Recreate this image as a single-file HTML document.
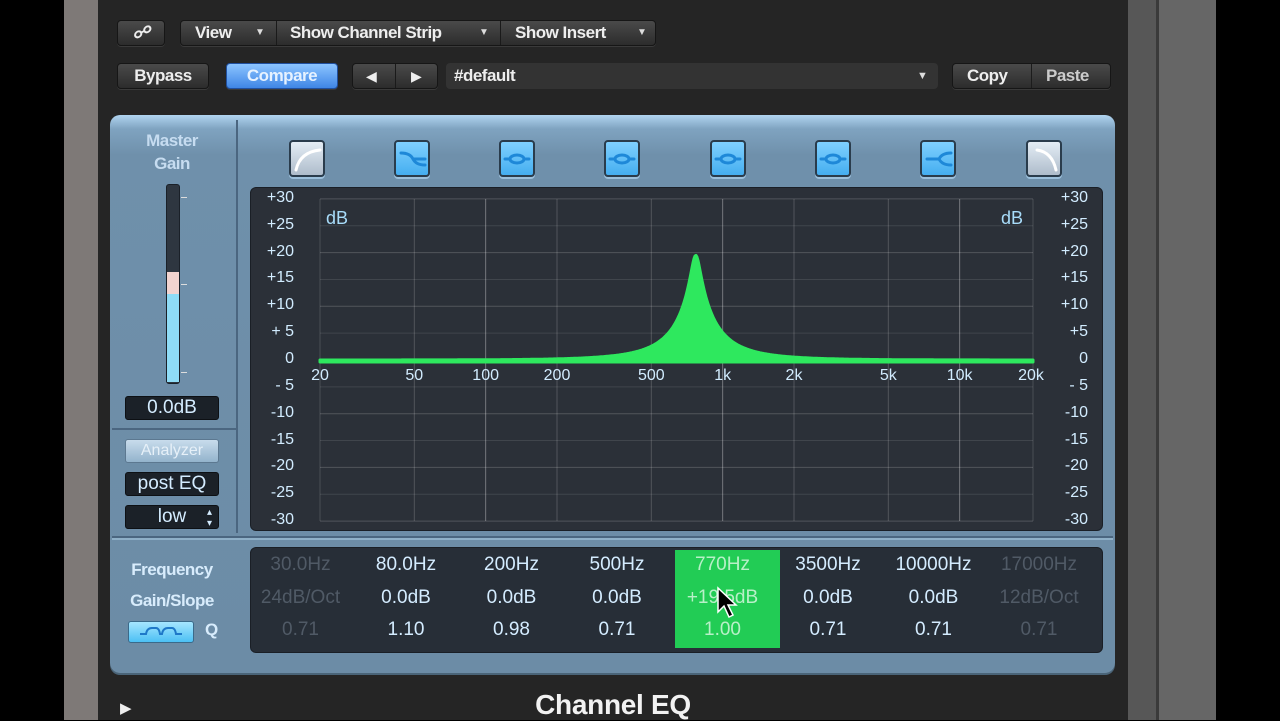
<!DOCTYPE html>
<html><head><meta charset="utf-8"><style>
*{margin:0;padding:0;box-sizing:border-box}
body{width:1280px;height:720px;background:#000;position:relative;overflow:hidden;font-family:"Liberation Sans",sans-serif}
.a{position:absolute}
.btn{position:absolute;height:26px;border-radius:4px;background:linear-gradient(#4a4a4a,#2c2c2c);border:1px solid #161616;color:#eee;font-weight:bold;font-size:17px;line-height:24px;text-align:center;letter-spacing:-0.5px;box-shadow:0 1px 0 #3a3a3a}
.lbl{color:#d2ecff;font-size:16px;position:absolute;text-align:right;width:40px}
.lblr{color:#d2ecff;font-size:16px;position:absolute;text-align:right;width:40px}
.fx{color:#d2ecff;font-size:16px;position:absolute;top:367px;transform:translateX(-50%)}
.bb{position:absolute;top:140px;width:36px;height:37px;border-radius:4px;border:2px solid #2a3c4c;background:linear-gradient(#7fd0ff,#45aef0);box-shadow:0 2px 0 #9cc0dc}
.bb.g{background:linear-gradient(#e4edf5,#aebccb)}
.col{position:absolute;width:105px;text-align:center;font-size:19px;color:#d4ecff}
.dim{color:#505a66}
.lp{position:absolute;left:125px;width:94px;height:24px;border-radius:3px;background:#1b2128;border:1px solid #0d1014;color:#d4ecff;font-size:19px;text-align:center;line-height:22px}
.tb{position:absolute;color:#eee;font-weight:bold;font-size:17px;line-height:24px;letter-spacing:-.5px}
</style></head><body>
<div class="a" style="left:64px;top:0;width:34px;height:720px;background:#7e7977"></div>
<div class="a" style="left:98px;top:0;width:1030px;height:720px;background:#252525"></div>
<div class="a" style="left:1128px;top:0;width:28px;height:720px;background:#575757"></div>
<div class="a" style="left:1156px;top:0;width:3px;height:720px;background:#3a3a3a"></div>
<div class="a" style="left:1159px;top:0;width:57px;height:720px;background:#666"></div>

<div class="btn" style="left:117px;top:20px;width:48px;font-style:italic">&#x260D;</div>
<div class="btn" style="left:180px;top:20px;width:476px"></div>
<div class="tb" style="left:195px;top:21px">View</div>
<div class="a" style="left:255px;top:21px;color:#ddd;font-size:10px;line-height:24px">▼</div>
<div class="a" style="left:276px;top:21px;width:1px;height:24px;background:#1a1a1a"></div>
<div class="tb" style="left:290px;top:21px">Show Channel Strip</div>
<div class="a" style="left:479px;top:21px;color:#ddd;font-size:10px;line-height:24px">▼</div>
<div class="a" style="left:500px;top:21px;width:1px;height:24px;background:#1a1a1a"></div>
<div class="tb" style="left:515px;top:21px">Show Insert</div>
<div class="a" style="left:637px;top:21px;color:#ddd;font-size:10px;line-height:24px">▼</div>
<div class="btn" style="left:117px;top:63px;width:92px">Bypass</div>
<div class="btn" style="left:226px;top:63px;width:112px;background:linear-gradient(#8cc4ff,#3f86e6);border-color:#2050a0;color:#e6f2ff">Compare</div>
<div class="btn" style="left:352px;top:63px;width:86px"></div>
<div class="a" style="left:395px;top:64px;width:1px;height:24px;background:#1a1a1a"></div>
<div class="a" style="left:366px;top:63px;color:#eee;font-size:14px;line-height:26px">◀</div>
<div class="a" style="left:411px;top:63px;color:#eee;font-size:14px;line-height:26px">▶</div>
<div class="a" style="left:446px;top:63px;width:492px;height:26px;border-radius:4px;background:#333"></div>
<div class="tb" style="left:454px;top:64px">#default</div>
<div class="a" style="left:917px;top:63px;color:#ddd;font-size:11px;line-height:26px">▼</div>
<div class="btn" style="left:952px;top:63px;width:159px"></div>
<div class="tb" style="left:967px;top:64px">Copy</div>
<div class="a" style="left:1031px;top:64px;width:1px;height:24px;background:#1c1c1c"></div>
<div class="tb" style="left:1046px;top:64px;color:#ccc">Paste</div>

<div class="a" style="left:110px;top:115px;width:1005px;height:558px;border-radius:10px;background:linear-gradient(#b0d4f0 0px,#7fa3c0 14px,#6f90ab 40px,#6c8ca6 100%);box-shadow:0 2px 0 #4a6478"></div>
<div class="a" style="left:236px;top:120px;width:2px;height:413px;background:#4b6680"></div>
<div class="a" style="left:112px;top:428px;width:124px;height:2px;background:#4b6680"></div>
<div class="a" style="left:112px;top:536px;width:1001px;height:2px;background:#4b6680"></div>
<div class="a" style="left:112px;top:538px;width:1001px;height:2px;background:#8fb0c8"></div>

<div class="a" style="left:125px;top:129px;width:94px;text-align:center;color:#c6dcf0;font-weight:bold;font-size:17px;line-height:23px;letter-spacing:-.5px">Master<br>Gain</div>
<div class="a" style="left:166px;top:184px;width:14px;height:200px;border-radius:3px;background:#2e3640;border:1px solid #1a2028"></div>
<div class="a" style="left:167px;top:272px;width:12px;height:22px;background:#f2d4d0"></div>
<div class="a" style="left:167px;top:294px;width:12px;height:88px;background:#8fdcf6"></div>
<div class="a" style="left:181px;top:197px;width:6px;height:1px;background:#ddd"></div>
<div class="a" style="left:181px;top:284px;width:6px;height:1px;background:#ddd"></div>
<div class="a" style="left:181px;top:372px;width:6px;height:1px;background:#ddd"></div>
<div class="lp" style="top:396px">0.0dB</div>
<div class="lp" style="top:439px;background:linear-gradient(#c8dcec,#93b3cc);border-color:#5c7890;color:#e6f0f8;font-size:16px">Analyzer</div>
<div class="lp" style="top:472px">post EQ</div>
<div class="lp" style="top:505px">low<span style="position:absolute;right:6px;top:0;font-size:10px;line-height:11px;padding-top:1px">▴<br>▾</span></div>

<div class="bb g" style="left:289px"></div>
<div class="bb" style="left:394px"></div>
<div class="bb" style="left:499px"></div>
<div class="bb" style="left:604px"></div>
<div class="bb" style="left:710px"></div>
<div class="bb" style="left:815px"></div>
<div class="bb" style="left:920px"></div>
<div class="bb g" style="left:1026px"></div>
<svg class="a" style="left:0;top:0" width="1280" height="200">
<g fill="none" stroke-width="3" stroke-linecap="round">
<path d="M296 170 Q300 152 320 150" stroke="#fff"/>
<path d="M1037 150 Q1052 152 1056 170" stroke="#fff"/>
<path d="M401 153 Q410 153 413 159 Q416 165 425 165 M413 159 H425" stroke="#1e88d8"/>
<ellipse cx="517" cy="159" rx="7" ry="4" stroke="#1e88d8"/><path d="M505 159H510M524 159H529" stroke="#1e88d8"/>
<ellipse cx="622" cy="159" rx="7" ry="4" stroke="#1e88d8"/><path d="M610 159H615M629 159H634" stroke="#1e88d8"/>
<ellipse cx="728" cy="159" rx="7" ry="4" stroke="#1e88d8"/><path d="M716 159H721M735 159H740" stroke="#1e88d8"/>
<ellipse cx="833" cy="159" rx="7" ry="4" stroke="#1e88d8"/><path d="M821 159H826M840 159H845" stroke="#1e88d8"/>
<path d="M951 153 Q942 153 939 159 Q942 165 951 165 M927 159H939" stroke="#1e88d8"/>
</g></svg>

<div class="a" style="left:250px;top:187px;width:853px;height:344px;border-radius:6px;background:#2b3038;border:1px solid #1a1f26"></div>
<svg class="a" style="left:0;top:0" width="1280" height="720" id="plot"></svg>
<div id="labels"></div>
<div class="a" style="left:326px;top:208px;color:#a8dcfa;font-size:18px">dB</div>
<div class="a" style="left:1001px;top:208px;color:#a8dcfa;font-size:18px">dB</div>

<div class="a" style="left:250px;top:547px;width:853px;height:106px;border-radius:6px;background:#272e37;border:1px solid #1a1f26"></div>
<div class="a" style="left:675px;top:550px;width:105px;height:98px;background:#22cc55"></div>
<div class="a" style="left:112px;top:560px;width:120px;text-align:center;color:#d8ecfc;font-weight:bold;font-size:17px;letter-spacing:-.5px">Frequency</div>
<div class="a" style="left:112px;top:591px;width:120px;text-align:center;color:#d8ecfc;font-weight:bold;font-size:17px;letter-spacing:-.5px">Gain/Slope</div>
<div class="a" style="left:128px;top:621px;width:66px;height:22px;border-radius:3px;background:linear-gradient(#a6e6ff,#4cc0f4);border:1px solid #3a6a8a"></div>
<svg class="a" style="left:138px;top:624px" width="46" height="16"><path d="M2 10 H8 Q9 4 14 4 H18 Q21 4 22 10 H24 Q25 4 30 4 H34 Q37 4 38 10 H44" fill="none" stroke="#1e78c8" stroke-width="2"/></svg>
<div class="a" style="left:205px;top:620px;color:#d8ecfc;font-weight:bold;font-size:17px">Q</div>
<div id="tbl"></div>
<svg class="a" style="left:716px;top:586px" width="24" height="36"><path d="M2 2 L2 26 L8 20 L13 31 L17 29 L12 19 L20 19 Z" fill="#000" stroke="#fff" stroke-width="1.5"/></svg>

<div class="a" style="left:120px;top:699px;color:#eee;font-size:15px">▶</div>
<div class="a" style="left:0;width:1226px;top:689px;text-align:center;color:#f2f2f2;font-weight:bold;font-size:28px;letter-spacing:-.3px">Channel EQ</div>
<script>
var s='',X0=320,D=237,Y0=360,K=5.37;
function fx(f){return X0+D*Math.log10(f/20)}
var vf=[[50,0.18],[100,0.35],[200,0.18],[500,0.18],[1000,0.35],[2000,0.18],[5000,0.18],[10000,0.35]];
vf.forEach(function(v){var x=fx(v[0]);s+='<line x1="'+x+'" y1="199" x2="'+x+'" y2="521" stroke="rgba(255,255,255,'+v[1]+')"/>'});
[320,1033].forEach(function(x){s+='<line x1="'+x+'" y1="199" x2="'+x+'" y2="521" stroke="rgba(255,255,255,0.15)"/>'});
for(var d=-30;d<=30;d+=5){var y=Y0-d*K;s+='<line x1="320" y1="'+y+'" x2="1033" y2="'+y+'" stroke="rgba(255,255,255,'+(d%10==0?0.18:0.1)+')"/>'}
var A=Math.pow(10,19.5/40),Q=3.8,f0=770,pts=[];
for(var x=320;x<=1033;x+=1){var f=20*Math.pow(10,(x-X0)/D),w=f/f0,r=1-w*w;
var g=10*Math.log10((r*r+Math.pow(w*A/Q,2))/(r*r+Math.pow(w/(A*Q),2)));pts.push(x+','+(Y0-g*K).toFixed(1))}
s+='<path d="M320,362 L'+pts.join(' L')+' L1033,362 Z" fill="#2ee85e" stroke="#2ee85e" stroke-width="3" stroke-linejoin="round"/>';
document.getElementById('plot').innerHTML=s;
var h='';
for(var d=30;d>=-30;d-=5){var y=Y0-d*K-10,t=d>0?'+'+(d<10?' ':'')+d:(d<0?(d>-10?'- ':'-')+(-d):'0');
h+='<div class="lbl" style="left:254px;top:'+y+'px">'+t+'</div><div class="lblr" style="left:1048px;top:'+y+'px">'+(d>0&&d<10?'+'+d:t)+'</div>'}
[['20',20],['50',50],['100',100],['200',200],['500',500],['1k',1000],['2k',2000],['5k',5000],['10k',10000],['20k',20000]].forEach(function(v){h+='<div class="fx" style="left:'+fx(v[1])+'px">'+v[0]+'</div>'});
document.getElementById('labels').innerHTML=h;
var c=[['30.0Hz','24dB/Oct','0.71',1],['80.0Hz','0.0dB','1.10'],['200Hz','0.0dB','0.98'],['500Hz','0.0dB','0.71'],['770Hz','+19.5dB','1.00'],['3500Hz','0.0dB','0.71'],['10000Hz','0.0dB','0.71'],['17000Hz','12dB/Oct','0.71',1]];
var t='';c.forEach(function(v,i){var x=248+i*105.5,cl=v[3]?' dim':'';
[v[0],v[1],v[2]].forEach(function(s,j){t+='<div class="col'+cl+'" style="left:'+x+'px;top:'+(554+j*32.5)+'px'+(i==4?';color:#b8f0c8':'')+'">'+s+'</div>'})});
document.getElementById('tbl').innerHTML=t;
</script>
</body></html>
